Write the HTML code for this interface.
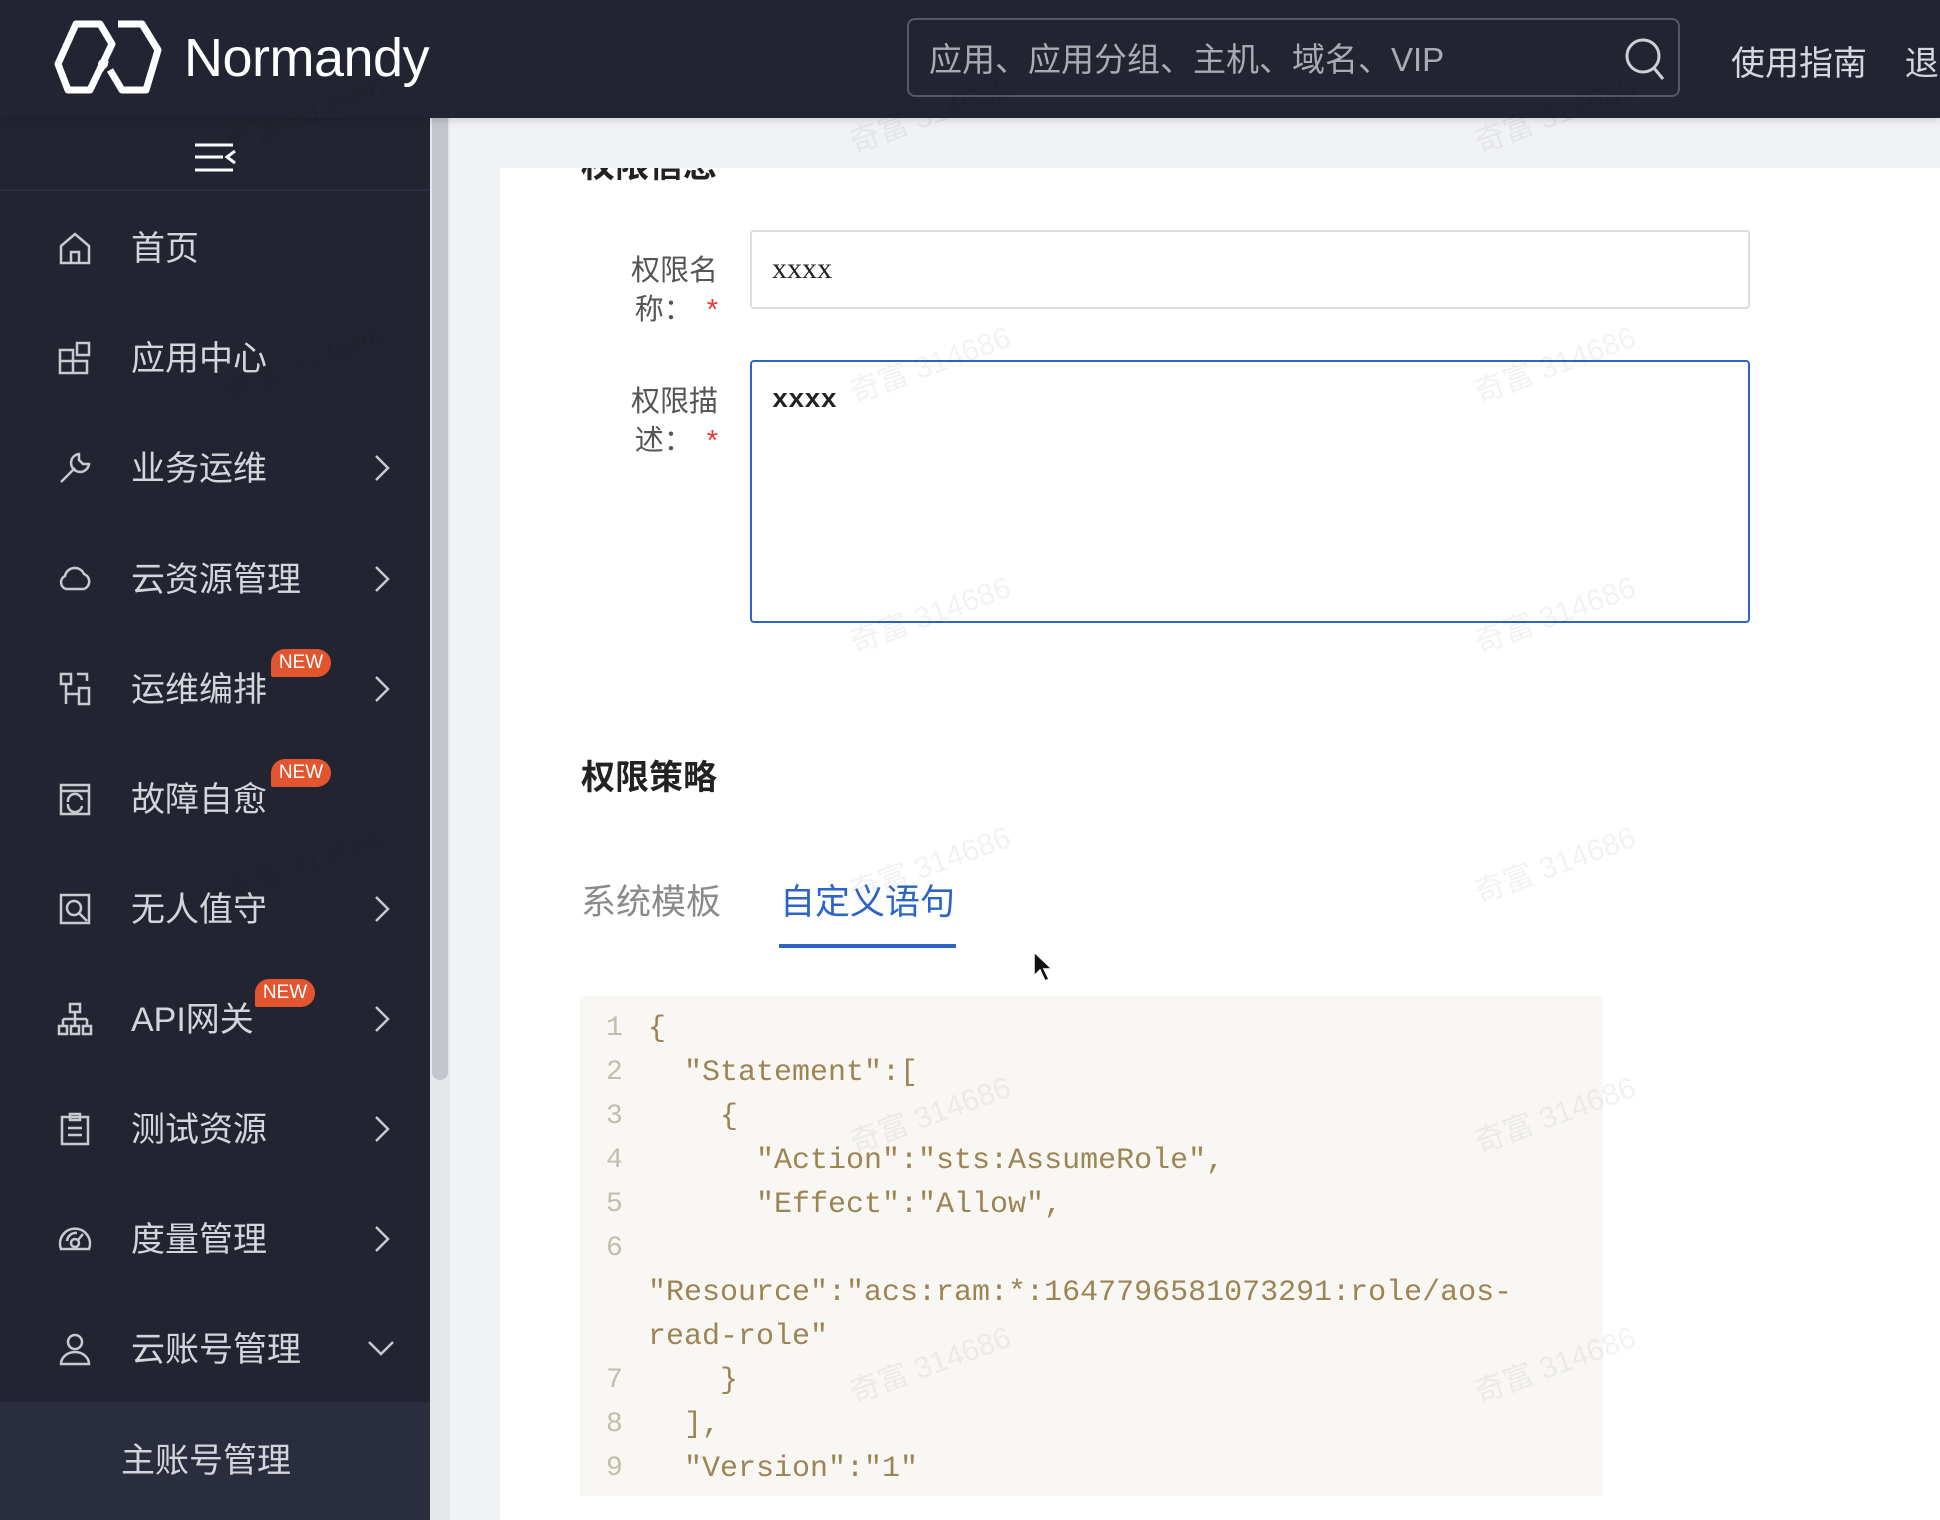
<!DOCTYPE html>
<html><head><meta charset="utf-8"><style>
*{margin:0;padding:0;box-sizing:border-box}
body{width:1940px;height:1520px;overflow:hidden;background:#f1f2f5;font-family:"Liberation Sans","Noto Sans CJK SC",sans-serif;position:relative}
.hdr{position:absolute;left:0;top:0;width:1940px;height:118px;background:#222431;box-shadow:0 2px 8px rgba(0,0,0,.15);z-index:3;overflow:hidden}
.logo{position:absolute;left:54px;top:20px}
.brand{position:absolute;left:184px;top:27px;color:#fff;font-size:54px;letter-spacing:-0.5px}
.search{position:absolute;left:907px;top:18px;width:773px;height:79px;border:2px solid #555866;border-radius:8px}
.search span{position:absolute;left:20px;top:13px;color:#a9abb3;font-size:33px}
.guide{position:absolute;left:1731px;top:36px;color:#d6d7dc;font-size:34px;white-space:nowrap}
.side{position:absolute;left:0;top:118px;width:430px;height:1402px;background:#222431;z-index:2}
.bar{position:absolute;left:430px;top:118px;width:20px;height:1402px;background:#e6e7eb}
.thumb{position:absolute;left:432px;top:118px;width:16px;height:962px;background:#c4c6cd;border-radius:0 0 8px 8px}
.tog{position:absolute;left:0;top:0;width:430px;height:73px;border-bottom:2px solid #2b2e3c}
.mi{position:absolute;left:0;width:430px;height:60px;color:#d4d5da;font-size:34px}
.mi svg{position:absolute;left:57px;top:13px}
.mi .t{position:absolute;left:131px;top:4px}
.mi .ch{position:absolute;left:372px;top:16px}
.new{position:absolute;width:60px;height:28px;background:#e2552f;border-radius:14px 14px 14px 2px;color:#fff;font-size:19px;text-align:center;line-height:28px}
.sub{position:absolute;left:0;top:1284px;width:430px;height:118px;background:#2a2d3d}
.sub span{position:absolute;left:121px;top:31px;color:#d4d5da;font-size:34px}
.card{position:absolute;left:500px;top:168px;width:1440px;height:1352px;background:#fff;overflow:hidden}
.lbl{position:absolute;color:#555;font-size:29px;line-height:39px;text-align:right}
.lbl b{color:#e33;font-weight:normal;margin-left:14px}
.inp{position:absolute;border:2px solid #dcdcdc;border-radius:4px;background:#fff}
.code{position:absolute;left:80px;top:828px;width:1023px;height:500px;background:#f8f7f4}
.ln{position:absolute;left:26px;color:#c4bdac;font-family:"Liberation Mono",monospace;font-size:28px}
.cd{position:absolute;left:68px;color:#9d8553;font-family:"Liberation Mono",monospace;font-size:30px;white-space:pre}
.wm{position:absolute;color:rgba(0,0,0,.05);font-size:30px;transform:rotate(-20deg);z-index:5;white-space:nowrap}
</style></head><body>
<div class="hdr">
<svg class="logo" width="110" height="74" viewBox="0 0 110 74"><g fill="none" stroke="#fff" stroke-width="7" stroke-linejoin="round"><path d="M22 4 L46 4 L58 24 L36 70 L14 70 L4 44 Z"/><path d="M64 4 L88 4 L104 30 L92 70 L68 70 L56 50"/><path d="M46 50 L52 40"/></g><circle cx="49" cy="44" r="5" fill="#fff"/></svg>
<div class="brand">Normandy</div>
<div class="search"><span>应用、应用分组、主机、域名、VIP</span>
<svg style="position:absolute;left:714px;top:16px" width="44" height="46" viewBox="0 0 44 46"><circle cx="20" cy="20" r="16" fill="none" stroke="#cfd0d5" stroke-width="3"/><path d="M31 32 L40 43" stroke="#cfd0d5" stroke-width="3"/></svg></div>
<div class="guide">使用指南 &nbsp; &nbsp;退</div>
</div>
<div class="side">
<div class="tog"><svg style="position:absolute;left:193px;top:24px" width="44" height="32" viewBox="0 0 44 32"><path d="M2 3H40M2 15H30M2 28H40M42 9L34 15L42 21" stroke="#fff" stroke-width="3" fill="none"/></svg></div>
<div class="mi" style="top:99px"><svg width="36" height="36" viewBox="0 0 36 36" fill="none" stroke="#c8cad0" stroke-width="2.5"><path d="M4 16L18 4L32 16V33H4Z M14 33V22H22V33"/></svg><span class="t">首页</span></div>
<div class="mi" style="top:209px"><svg width="36" height="36" viewBox="0 0 36 36" fill="none" stroke="#c8cad0" stroke-width="2.5"><path d="M3 10H16V33H3ZM3 21H16M16 21H30V33H16M20 3H32V15H20Z"/></svg><span class="t">应用中心</span></div>
<div class="mi" style="top:319px"><svg width="36" height="36" viewBox="0 0 36 36" fill="none" stroke="#c8cad0" stroke-width="2.5"><path d="M4 32L18 18M22 4A9 9 0 1 0 32 14L26 14L22 10Z"/></svg><span class="t">业务运维</span><svg class="ch" width="20" height="30" viewBox="0 0 20 30"><path d="M4 3L16 15L4 27" stroke="#c8cad0" stroke-width="2.5" fill="none"/></svg></div>
<div class="mi" style="top:430px"><svg width="36" height="36" viewBox="0 0 36 36" fill="none" stroke="#c8cad0" stroke-width="2.5"><path d="M9 28A7 7 0 0 1 8 15A10 10 0 0 1 27 13A8 8 0 0 1 27 28Z"/></svg><span class="t">云资源管理</span><svg class="ch" width="20" height="30" viewBox="0 0 20 30"><path d="M4 3L16 15L4 27" stroke="#c8cad0" stroke-width="2.5" fill="none"/></svg></div>
<div class="mi" style="top:540px"><svg width="36" height="36" viewBox="0 0 36 36" fill="none" stroke="#c8cad0" stroke-width="2.5"><path d="M4 3H14V13H4ZM9 13V33M9 23H22M22 17H32V33H22ZM20 3H30V10"/></svg><span class="t">运维编排</span><svg class="ch" width="20" height="30" viewBox="0 0 20 30"><path d="M4 3L16 15L4 27" stroke="#c8cad0" stroke-width="2.5" fill="none"/></svg></div>
<div class="new" style="left:271px;top:531px">NEW</div>
<div class="mi" style="top:650px"><svg width="36" height="36" viewBox="0 0 36 36" fill="none" stroke="#c8cad0" stroke-width="2.5"><path d="M4 4H32V33H4ZM4 10H32M11 21A7 7 0 0 1 25 19M25 25A7 7 0 0 1 11 23"/></svg><span class="t">故障自愈</span></div>
<div class="new" style="left:271px;top:641px">NEW</div>
<div class="mi" style="top:760px"><svg width="36" height="36" viewBox="0 0 36 36" fill="none" stroke="#c8cad0" stroke-width="2.5"><path d="M4 4H32V32H4Z"/><circle cx="17" cy="17" r="7"/><path d="M22 22L30 30"/></svg><span class="t">无人值守</span><svg class="ch" width="20" height="30" viewBox="0 0 20 30"><path d="M4 3L16 15L4 27" stroke="#c8cad0" stroke-width="2.5" fill="none"/></svg></div>
<div class="mi" style="top:870px"><svg width="36" height="36" viewBox="0 0 36 36" fill="none" stroke="#c8cad0" stroke-width="2.5"><path d="M13 3H23V11H13ZM18 11V18M6 18H30M6 18V25M18 18V25M30 18V25M2 25H10V33H2ZM14 25H22V33H14ZM26 25H34V33H26Z"/></svg><span class="t">API网关</span><svg class="ch" width="20" height="30" viewBox="0 0 20 30"><path d="M4 3L16 15L4 27" stroke="#c8cad0" stroke-width="2.5" fill="none"/></svg></div>
<div class="new" style="left:255px;top:861px">NEW</div>
<div class="mi" style="top:980px"><svg width="36" height="36" viewBox="0 0 36 36" fill="none" stroke="#c8cad0" stroke-width="2.5"><path d="M5 6H31V33H5ZM13 3H23V9H13ZM11 17H25M11 24H25"/></svg><span class="t">测试资源</span><svg class="ch" width="20" height="30" viewBox="0 0 20 30"><path d="M4 3L16 15L4 27" stroke="#c8cad0" stroke-width="2.5" fill="none"/></svg></div>
<div class="mi" style="top:1090px"><svg width="36" height="36" viewBox="0 0 36 36" fill="none" stroke="#c8cad0" stroke-width="2.5"><path d="M4 28A15 15 0 1 1 32 28Z"/><circle cx="18" cy="22" r="4"/><path d="M21 19L26 13M10 20A9 9 0 0 1 20 12"/></svg><span class="t">度量管理</span><svg class="ch" width="20" height="30" viewBox="0 0 20 30"><path d="M4 3L16 15L4 27" stroke="#c8cad0" stroke-width="2.5" fill="none"/></svg></div>
<div class="mi" style="top:1200px"><svg width="36" height="36" viewBox="0 0 36 36" fill="none" stroke="#c8cad0" stroke-width="2.5"><circle cx="18" cy="11" r="7"/><path d="M4 33A14 12 0 0 1 32 33Z"/></svg><span class="t">云账号管理</span><svg style="position:absolute;left:366px;top:20px" width="30" height="20" viewBox="0 0 30 20"><path d="M3 4L15 16L27 4" stroke="#c8cad0" stroke-width="2.5" fill="none"/></svg></div>
<div class="sub"><span>主账号管理</span></div>
</div>
<div class="bar"></div><div class="thumb"></div>
<div class="card">
<div style="position:absolute;left:81px;top:-30px;font-size:34px;font-weight:bold;color:#222">权限信息</div>
<div class="lbl" style="left:114px;top:84px;width:104px">权限名<br>称：<b>*</b></div>
<div class="inp" style="left:250px;top:62px;width:1000px;height:79px"><span style="position:absolute;left:20px;top:20px;font-family:'Liberation Serif',serif;font-size:30px;color:#222">xxxx</span></div>
<div class="lbl" style="left:114px;top:215px;width:104px">权限描<br>述：<b>*</b></div>
<div class="inp" style="left:250px;top:192px;width:1000px;height:263px;border-color:#2d64c8"><span style="position:absolute;left:20px;top:24px;font-family:'Liberation Mono',monospace;font-weight:bold;font-size:27px;color:#222">xxxx</span></div>
<div style="position:absolute;left:81px;top:582px;font-size:34px;font-weight:bold;color:#222">权限策略</div>
<div style="position:absolute;left:81px;top:706px;font-size:35px;color:#8a8a8a">系统模板</div>
<div style="position:absolute;left:280px;top:706px;font-size:35px;color:#2d64c8">自定义语句</div>
<div style="position:absolute;left:279px;top:776px;width:177px;height:4px;background:#2d64c8"></div>
<svg style="position:absolute;left:532px;top:782px" width="22" height="34" viewBox="0 0 22 34"><path d="M2 2L2 26L8 20L13 31L17 29L12 19L20 19Z" fill="#111" stroke="#fff" stroke-width="1.5"/></svg>
<div class="code">
<div class="ln" style="top:17px">1</div><div class="cd" style="top:16px">{</div>
<div class="ln" style="top:61px">2</div><div class="cd" style="top:60px">  "Statement":[</div>
<div class="ln" style="top:105px">3</div><div class="cd" style="top:104px">    {</div>
<div class="ln" style="top:149px">4</div><div class="cd" style="top:148px">      "Action":"sts:AssumeRole",</div>
<div class="ln" style="top:193px">5</div><div class="cd" style="top:192px">      "Effect":"Allow",</div>
<div class="ln" style="top:237px">6</div>
<div class="cd" style="top:280px">"Resource":"acs:ram:*:1647796581073291:role/aos-</div>
<div class="cd" style="top:324px">read-role"</div>
<div class="ln" style="top:369px">7</div><div class="cd" style="top:368px">    }</div>
<div class="ln" style="top:413px">8</div><div class="cd" style="top:412px">  ],</div>
<div class="ln" style="top:457px">9</div><div class="cd" style="top:456px">  "Version":"1"</div>
</div>
</div>
<div class="wm" style="left:220px;top:90px">奇富 314686</div>
<div class="wm" style="left:845px;top:90px">奇富 314686</div>
<div class="wm" style="left:1470px;top:90px">奇富 314686</div>
<div class="wm" style="left:220px;top:340px">奇富 314686</div>
<div class="wm" style="left:845px;top:340px">奇富 314686</div>
<div class="wm" style="left:1470px;top:340px">奇富 314686</div>
<div class="wm" style="left:845px;top:590px">奇富 314686</div>
<div class="wm" style="left:1470px;top:590px">奇富 314686</div>
<div class="wm" style="left:220px;top:840px">奇富 314686</div>
<div class="wm" style="left:845px;top:840px">奇富 314686</div>
<div class="wm" style="left:1470px;top:840px">奇富 314686</div>
<div class="wm" style="left:845px;top:1090px">奇富 314686</div>
<div class="wm" style="left:1470px;top:1090px">奇富 314686</div>
<div class="wm" style="left:845px;top:1340px">奇富 314686</div>
<div class="wm" style="left:1470px;top:1340px">奇富 314686</div>
</body></html>
